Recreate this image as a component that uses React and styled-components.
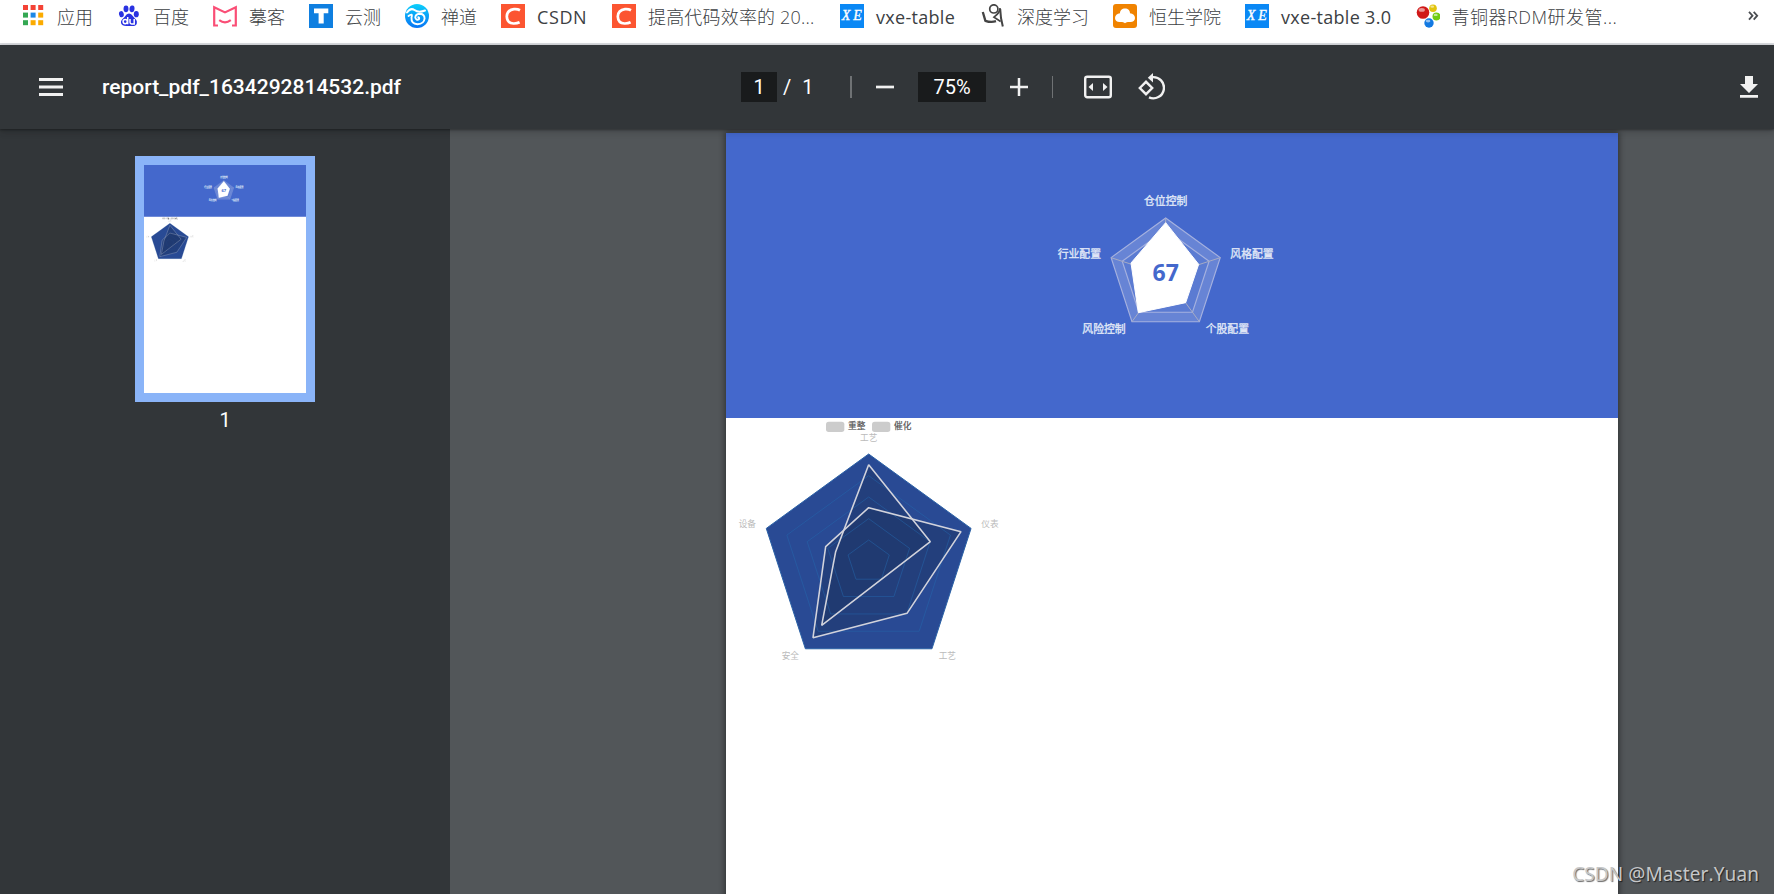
import React from "react";
import styled, { createGlobalStyle } from "styled-components";

const Global = createGlobalStyle`
  *{box-sizing:border-box}
  html,body,#root{margin:0;height:100%;overflow:hidden}
  body{font-family:Roboto,"Noto Sans CJK SC",sans-serif;background:#525659}
  svg{display:block;flex:none}
`;

const Window = styled.div`display:flex;flex-direction:column;height:894px;width:1774px;overflow:hidden;position:relative;`;
const Bookmarks = styled.nav`
  display:flex;align-items:flex-start;height:45px;flex:none;padding:4px 15px 0 21px;
  background:#fff;border-bottom:2px solid #dadce0;
  font-family:"Open Sans","Noto Sans CJK SC",sans-serif;font-size:18px;color:#3c4043;
`;
const Bookmark = styled.a`display:flex;align-items:flex-start;gap:12px;width:${(p) => p.$w}px;flex:none;height:28px;white-space:nowrap;`;
const BookmarkLabel = styled.span`line-height:26px;font-weight:${(p) => (p.$latin ? 400 : 300)};letter-spacing:${(p) => p.$ls || 0}px;`;
const More = styled.span`margin-left:auto;display:flex;padding-top:7px;`;

const Toolbar = styled.header`
  display:flex;align-items:center;height:84px;flex:none;background:#323639;color:#fff;
  padding:0 15px 0 36px;position:relative;z-index:2;font-size:20px;
  box-shadow:0 4px 8px rgba(0,0,0,.06),0 1px 2px rgba(0,0,0,.3),0 2px 6px rgba(0,0,0,.15);
`;
const FileName = styled.h1`margin:0 0 0 36px;width:639px;font-size:21px;line-height:30px;font-weight:500;`;
const Field = styled.span`display:flex;align-items:center;justify-content:center;width:${(p) => p.$w}px;height:30px;background:#191b1c;`;
const PageCount = styled.span`display:flex;gap:11px;margin-left:6px;width:61px;white-space:pre;`;
const Divider = styled.i`width:${(p) => p.$t}px;height:22px;background:#6f7274;`;
const IconButton = styled.span`display:flex;justify-content:center;align-items:center;width:${(p) => p.$w}px;height:36px;`;
const Spacer = styled.span`width:${(p) => p.$w}px;flex:none;`;
const DownloadSlot = styled.span`margin-left:auto;`;

const Viewer = styled.main`display:flex;flex:1;min-height:0;`;
const Sidebar = styled.aside`width:450px;flex:none;background:#323639;display:flex;flex-direction:column;align-items:center;padding-top:27px;color:#fff;`;
const Thumb = styled.div`width:180px;height:246px;border:9px solid #8ab4f8;overflow:hidden;background:#fff;`;
const ThumbScale = styled.div`width:892px;height:1255px;transform:scale(.18162);transform-origin:0 0;`;
const ThumbNumber = styled.span`font-size:20px;line-height:24px;margin-top:6px;`;
const Canvas = styled.section`flex:1;background:#525659;padding:4px 0 0 276px;overflow:hidden;`;
const Paper = styled.article`width:892px;height:1255px;background:#fff;box-shadow:0 0 6px 1px rgba(0,0,0,.45);`;
const Hero = styled.div`height:285px;background:#4468cc;padding:47px 0 0 314px;`;
const Watermark = styled.div`
  position:absolute;right:15px;bottom:7px;z-index:3;font-family:"Noto Sans",sans-serif;font-size:19px;line-height:25px;
  font-kerning:none;letter-spacing:.1px;color:#c6c7c8;text-shadow:1px 1px 1px rgba(0,0,0,.6);
`;

const chartFont = '"Noto Sans CJK SC", sans-serif';

function ring(cx, cy, r) {
  return [0, 1, 2, 3, 4]
    .map((i) => {
      const a = (-90 + i * 72) * (Math.PI / 180);
      return `${(cx + r * Math.cos(a)).toFixed(1)},${(cy + r * Math.sin(a)).toFixed(1)}`;
    })
    .join(" ");
}

function ScoreRadar() {
  const labels = [["仓位控制", 377, 75], ["风格配置", 636, 233], ["个股配置", 562, 460], ["风险控制", 192, 460], ["行业配置", 118, 233]];
  return (
    <svg width="250" height="170" viewBox="0 0 750 510">
      <polygon points={ring(377, 286, 172)} fill="#6784d5" stroke="#a5b1df" strokeWidth="3.5" />
      <polygon points={ring(377, 286, 137)} fill="#5b7bd2" stroke="#a5b1df" strokeWidth="3.5" />
      <g fill="none" stroke="#a6abc4" strokeWidth="3">
        <path d="M377 114V286L541 233M377 286L478 425M377 286L276 425M377 286L213 233" />
      </g>
      <path d="M377 128L476 253L437 368L295 398L273 249Z" fill="#fff" stroke="#fff" strokeWidth="3" />
      <text x="377" y="302" textAnchor="middle" fontSize="69" fontWeight="700" fontFamily='"Open Sans", sans-serif' fill="#4468cc">67</text>
      <g fontFamily={chartFont} fontSize="32.5" fill="#dfe5f6" stroke="#dfe5f6" strokeWidth="1.1" textAnchor="middle">
        {labels.map(([t, x, y]) => <text key={t} x={x} y={y}>{t}</text>)}
      </g>
    </svg>
  );
}

function ProcessRadar() {
  const labels = [["工艺", 446, 124], ["仪表", 810, 381], ["工艺", 682, 777], ["安全", 211, 777], ["设备", 82, 381]];
  return (
    <svg width="300" height="262" viewBox="18 54 900 786">
      <rect x="318" y="65" width="55" height="31" rx="8" fill="#ccc" />
      <rect x="456" y="65" width="55" height="31" rx="8" fill="#ccc" />
      <g fontFamily={chartFont} fontSize="26" fill="#555" stroke="#555" strokeWidth=".6">
        <text x="384" y="88">重整</text>
        <text x="522" y="88">催化</text>
      </g>
      <polygon points={ring(446, 485, 323)} fill="#294a94" stroke="#2a61a6" strokeWidth="3" />
      <path d="M446 323L723 395L561 640L279 713L317 440Z" fill="#1f3667" fillOpacity=".55" />
      <path d="M446 194L631 425L305 676L347 455Z" fill="#1f3667" fillOpacity=".55" />
      {[65, 129, 194, 258].map((r) => (
        <polygon key={r} points={ring(446, 485, r)} fill="none" stroke="#2467ad" strokeOpacity=".5" strokeWidth="3" />
      ))}
      <g fill="none" stroke="#d2d3dc" strokeWidth="4.7" strokeLinejoin="bevel">
        <path d="M446 323L723 395L561 640L279 713L317 440Z" />
        <path d="M446 194L631 425L305 676L347 455Z" />
      </g>
      <g fontFamily={chartFont} fontSize="26" fill="#bbb" textAnchor="middle">
        {labels.map(([t, x, y]) => <text key={x} x={x} y={y}>{t}</text>)}
      </g>
    </svg>
  );
}

const Report = () => (<><Hero><ScoreRadar /></Hero><ProcessRadar /></>);

const Box = ({ children }) => <svg width="24" height="24" viewBox="0 0 24 24">{children}</svg>;

const AppsIcon = () => {
  const c = ["#f44336", "#f44336", "#f44336", "#34a853", "#1e88e5", "#fbab00", "#34a853", "#fbab00", "#fbab00"];
  return <Box>{c.map((f, i) => <rect key={i} x={2 + (i % 3) * 7.6} y={1 + Math.floor(i / 3) * 7.6} width="5" height="5" fill={f} />)}</Box>;
};
const BaiduIcon = () => (
  <Box>
    <g fill="#2932e1">
      <ellipse cx="4.4" cy="10.2" rx="2.4" ry="3.1" transform="rotate(-10 4.4 10.2)" />
      <ellipse cx="9" cy="4.8" rx="2.5" ry="3.4" />
      <ellipse cx="15" cy="4.8" rx="2.5" ry="3.4" transform="rotate(8 15 4.8)" />
      <ellipse cx="19.3" cy="10.2" rx="2.5" ry="3.1" />
      <path d="M12 9.4c2.400 0 3.400 2.300 4.800 3.900 1.900 1.900 3.700 3.400 3 6.100-.7 2.700-3 3-7.800 2.500-4.900.5-7.400-.2-8-2.800-.5-2.700 1.300-4 3.100-5.700C8.700 11.700 9.600 9.400 12 9.400z" />
    </g>
    <g stroke="#fff" strokeWidth="1.500" fill="none">
      <circle cx="8.200" cy="17.600" r="2.100" /><path d="M10.700 13v7.300M13 15v3.200q0 1.700 1.600 1.700h2.600V15" />
    </g>
  </Box>
);
const MockIcon = () => (
  <Box><g fill="none" stroke="#fa4e76" strokeWidth="2.200"><path d="M5 21.500H1.200V3.200L12 8.400 22.800 3.200V21.500H19" /><path d="M6.200 16.200Q12 20.500 17.800 16.200" /></g></Box>
);
const TestIcon = () => (
  <Box><rect width="24" height="24" fill="#0f7fe0" /><path d="M5 4.500H19.300V9.300H14.700V19.600H9.600V9.300H5Z" fill="#fff" /></Box>
);
const ZenIcon = () => (
  <Box>
    <defs><linearGradient id="zen" x2="0" y2="1"><stop stopColor="#0cd0fb" /><stop offset="1" stopColor="#0874f4" /></linearGradient></defs>
    <circle cx="12" cy="12" r="12" fill="url(#zen)" />
    <g fill="none" stroke="#fff" strokeLinecap="round">
      <path d="M2 8.500Q5.500 3.500 9.500 6Q13.500 9 20 6.500" strokeWidth="2" />
      <path d="M3.500 12Q8 8.500 6.500 13.500Q6 19.800 12.500 20.200Q19 20 19.600 14.500Q19.500 9.800 14.500 9.800Q10.300 10.300 10.300 13.800Q11.300 16.700 14 15.200Q14.600 13.600 13.300 13.300" strokeWidth="1.900" />
    </g>
  </Box>
);
const CIcon = () => (
  <Box><rect width="24" height="24" fill="#fc5531" /><path d="M19 6.200Q16.500 4.800 13 5.100Q6 6 5.800 12.500Q6 19.200 12.500 19.500Q16 19.600 18.600 18.300" fill="none" stroke="#fff" strokeWidth="2.700" /></Box>
);
const XeIcon = () => (
  <Box><rect width="24" height="24" fill="#0a88f5" /><text x="1.800" y="16.400" fontFamily='"Liberation Serif", serif' fontStyle="italic" fontSize="14" fill="#fff" stroke="#fff" strokeWidth=".35" textLength="20" lengthAdjust="spacing">XE</text></Box>
);
const LearnIcon = () => (
  <Box>
    <g fill="none" stroke="#444">
      <circle cx="12.800" cy="4.900" r="4.100" strokeWidth="1.700" />
      <path d="M1.800 8L4.400 16.800Q10 18.800 15 17.200" strokeWidth="2.300" strokeLinejoin="round" />
      <path d="M19 4Q19.500 8 13 13.200L19.600 17.500" strokeWidth="1.700" />
      <path d="M19.200 5L20 14L21.800 22.500" strokeWidth="2" />
    </g>
  </Box>
);
const CloudIcon = () => (
  <Box><rect width="24" height="24" rx="3" fill="#f08300" /><path d="M12 4.500C15 4.500 17 6.500 17 9.300C20 9.500 22 11.500 22 14C22 16.500 20 18 17.500 18C15.500 18 14.500 17.500 12 19.200C9.500 17.500 8.500 18 6.500 18C4 18 2 16.500 2 14C2 11.500 4 9.500 7 9.300C7 6.500 9 4.500 12 4.500Z" fill="#fff" /></Box>
);
const BallsIcon = () => {
  const balls = [[7, 8.500, 6.300, "#d01818"], [17, 4.200, 3.800, "#e2c40c"], [20.500, 12.500, 4, "#70cc12"], [13, 19, 4.700, "#1279e2"]];
  return (
    <Box>
      {balls.map(([x, y, r, f]) => <g key={f}><circle cx={x} cy={y} r={r} fill={f} /><ellipse cx={x - r * 0.2} cy={y - r * 0.4} rx={r * 0.5} ry={r * 0.3} fill="#fff" opacity=".55" /></g>)}
    </Box>
  );
};

const bookmarks = [
  { label: "应用", Icon: AppsIcon, w: 96 },
  { label: "百度", Icon: BaiduIcon, w: 96 },
  { label: "摹客", Icon: MockIcon, w: 96 },
  { label: "云测", Icon: TestIcon, w: 96 },
  { label: "禅道", Icon: ZenIcon, w: 96 },
  { label: "CSDN", Icon: CIcon, w: 111, latin: true, ls: 0.6 },
  { label: "提高代码效率的 20...", Icon: CIcon, w: 228, ls: 0.18 },
  { label: "vxe-table", Icon: XeIcon, w: 141, latin: true, ls: 0.3 },
  { label: "深度学习", Icon: LearnIcon, w: 132 },
  { label: "恒生学院", Icon: CloudIcon, w: 132 },
  { label: "vxe-table 3.0", Icon: XeIcon, w: 170.5, latin: true, ls: 0.3 },
  { label: "青铜器RDM研发管...", Icon: BallsIcon, w: 220, ls: 0.5 },
];

export default function App() {
  return (
    <Window>
      <Global />
      <Bookmarks>
        {bookmarks.map(({ label, Icon, w, latin, ls }) => (
          <Bookmark key={label} $w={w}><Icon /><BookmarkLabel $latin={latin} $ls={ls}>{label}</BookmarkLabel></Bookmark>
        ))}
        <More><svg width="11" height="10" viewBox="0 0 11 10"><path d="M1 .8L4.500 4.700L1 8.600M5.700 .8L9.200 4.700L5.700 8.600" fill="none" stroke="#4a4d51" strokeWidth="1.800" /></svg></More>
      </Bookmarks>
      <Toolbar>
        <svg width="30" height="24" viewBox="0 0 30 24"><path d="M3 4.500H27M3 12H27M3 19.500H27" stroke="#f1f1f1" strokeWidth="3" /></svg>
        <FileName>report_pdf_1634292814532.pdf</FileName>
        <Field $w={36}>1</Field>
        <PageCount><span>/</span><span>1</span></PageCount>
        <Spacer $w={6} />
        <Divider $t={2} />
        <IconButton $w={66}><svg width="18" height="18" viewBox="0 0 18 18"><path d="M0 9H18" stroke="#f1f1f1" strokeWidth="2.700" /></svg></IconButton>
        <Field $w={68}>75%</Field>
        <IconButton $w={66}><svg width="18" height="18" viewBox="0 0 18 18"><path d="M0 9H18M9 0V18" stroke="#f1f1f1" strokeWidth="2.500" /></svg></IconButton>
        <Divider $t={1} />
        <Spacer $w={18} />
        <IconButton $w={54}>
          <svg width="28" height="24" viewBox="0 0 28 24"><rect x="1.200" y="1.700" width="25.600" height="20.600" rx="2" fill="none" stroke="#f1f1f1" strokeWidth="2.400" /><path d="M9 8V16L4.500 12ZM19 8V16L23.500 12Z" fill="#f1f1f1" /></svg>
        </IconButton>
        <IconButton $w={52}>
          <svg width="28" height="28" viewBox="0 0 28 28"><g fill="none" stroke="#f1f1f1" strokeWidth="2.400"><path d="M2.800 15L9 8.800L15.200 15L9 21.200Z" /><path d="M15.200 4.200A10.600 10.600 0 1 1 12 24.400" /></g><path d="M16 0V9.500L10.800 4.800Z" fill="#f1f1f1" /></svg>
        </IconButton>
        <DownloadSlot>
          <svg width="20" height="24" viewBox="0 0 20 24"><path d="M6 1H14V9H19L10 18L1 9H6ZM1 20H19V22.700H1Z" fill="#f1f1f1" /></svg>
        </DownloadSlot>
      </Toolbar>
      <Viewer>
        <Sidebar>
          <Thumb><ThumbScale><Report /></ThumbScale></Thumb>
          <ThumbNumber>1</ThumbNumber>
        </Sidebar>
        <Canvas><Paper><Report /></Paper></Canvas>
      </Viewer>
      <Watermark>CSDN @Master.Yuan</Watermark>
    </Window>
  );
}
